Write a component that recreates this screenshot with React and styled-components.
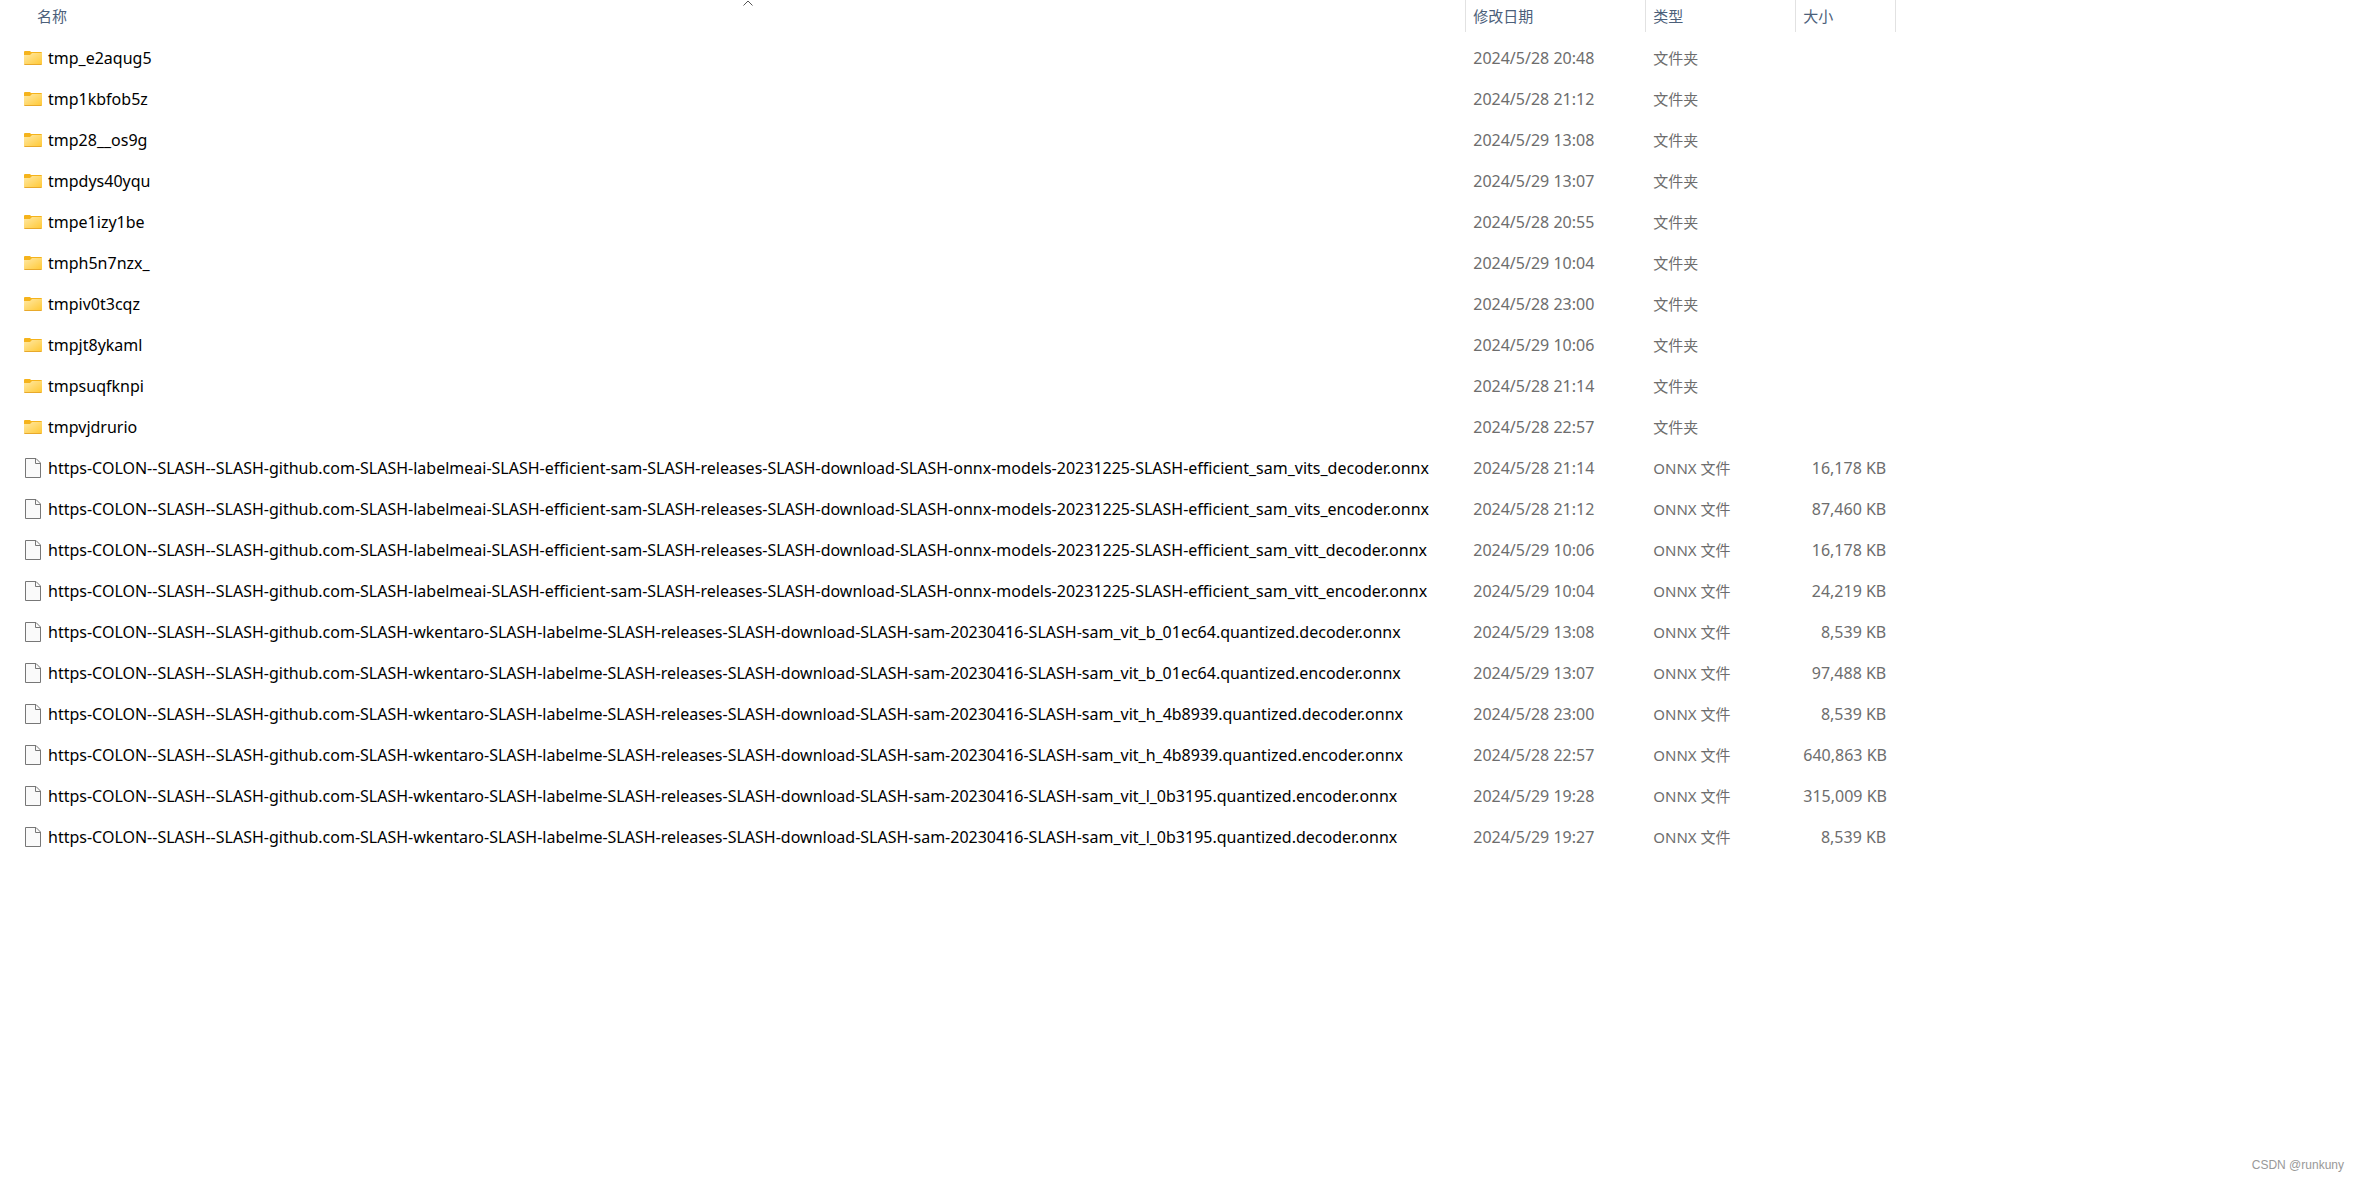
import React from "react"
import styled, { createGlobalStyle } from "styled-components"

const efficientSam = "https-COLON--SLASH--SLASH-github.com-SLASH-labelmeai-SLASH-efficient-sam-SLASH-releases-SLASH-download-SLASH-onnx-models-20231225-SLASH-"
const labelme = "https-COLON--SLASH--SLASH-github.com-SLASH-wkentaro-SLASH-labelme-SLASH-releases-SLASH-download-SLASH-sam-20230416-SLASH-"

const folders = [
  { name: "tmp_e2aqug5", date: "2024/5/28 20:48" },
  { name: "tmp1kbfob5z", date: "2024/5/28 21:12" },
  { name: "tmp28__os9g", date: "2024/5/29 13:08" },
  { name: "tmpdys40yqu", date: "2024/5/29 13:07" },
  { name: "tmpe1izy1be", date: "2024/5/28 20:55" },
  { name: "tmph5n7nzx_", date: "2024/5/29 10:04" },
  { name: "tmpiv0t3cqz", date: "2024/5/28 23:00" },
  { name: "tmpjt8ykaml", date: "2024/5/29 10:06" },
  { name: "tmpsuqfknpi", date: "2024/5/28 21:14" },
  { name: "tmpvjdrurio", date: "2024/5/28 22:57" },
]

const files = [
  { name: efficientSam + "efficient_sam_vits_decoder.onnx", date: "2024/5/28 21:14", size: "16,178 KB" },
  { name: efficientSam + "efficient_sam_vits_encoder.onnx", date: "2024/5/28 21:12", size: "87,460 KB" },
  { name: efficientSam + "efficient_sam_vitt_decoder.onnx", date: "2024/5/29 10:06", size: "16,178 KB" },
  { name: efficientSam + "efficient_sam_vitt_encoder.onnx", date: "2024/5/29 10:04", size: "24,219 KB" },
  { name: labelme + "sam_vit_b_01ec64.quantized.decoder.onnx", date: "2024/5/29 13:08", size: "8,539 KB" },
  { name: labelme + "sam_vit_b_01ec64.quantized.encoder.onnx", date: "2024/5/29 13:07", size: "97,488 KB" },
  { name: labelme + "sam_vit_h_4b8939.quantized.decoder.onnx", date: "2024/5/28 23:00", size: "8,539 KB" },
  { name: labelme + "sam_vit_h_4b8939.quantized.encoder.onnx", date: "2024/5/28 22:57", size: "640,863 KB" },
  { name: labelme + "sam_vit_l_0b3195.quantized.encoder.onnx", date: "2024/5/29 19:28", size: "315,009 KB" },
  { name: labelme + "sam_vit_l_0b3195.quantized.decoder.onnx", date: "2024/5/29 19:27", size: "8,539 KB" },
]

const FolderIcon = () => (
  <Icon width="18" height="14" viewBox="0 0 18 14" aria-hidden="true">
    <defs>
      <linearGradient id="folder-front" x1="0" y1="0" x2="1" y2="1">
        <stop offset="0" stopColor="#ffe9a6" />
        <stop offset="1" stopColor="#ffc937" />
      </linearGradient>
    </defs>
    <path d="M0 1Q0 0 1 0H6L7 1H17Q18 1 18 2V8H0Z" fill="#f5b31b" />
    <path d="M0 4H6L8 2H18V13H0Z" fill="url(#folder-front)" />
    <path d="M0 13H18Q18 14 17 14H1Q0 14 0 13Z" fill="#e8a92b" />
  </Icon>
)

const FileIcon = () => (
  <Icon width="18" height="20" viewBox="0 0 18 20" aria-hidden="true">
    <path d="M1.5 .5H12L16.5 5V19.5H1.5Z" fill="#fafafa" stroke="#777" />
    <path d="M11.5 .5V5.5H16.5" fill="none" stroke="#777" />
  </Icon>
)

const Row = ({ icon, name, date, type, size }) => (
  <tr>
    <NameCell>
      <Name>
        {icon}
        <span>{name}</span>
      </Name>
    </NameCell>
    <Cell>{date}</Cell>
    <TypeCell>{type}</TypeCell>
    <SizeCell>{size}</SizeCell>
  </tr>
)

export default function App() {
  return (
    <Page>
      <GlobalStyle />
      <Table>
        <colgroup>
          <col />
          <Col $width="180px" />
          <Col $width="150px" />
          <Col $width="100px" />
          <Col $width="19.65%" />
        </colgroup>
        <thead>
          <tr>
            <HeadCell aria-sort="ascending">
              <SortButton $main>
                名称
                <Caret width="10" height="6" viewBox="0 0 10 6" aria-hidden="true">
                  <path d="M.5 5.5L5 1L9.5 5.5" fill="none" stroke="#555" />
                </Caret>
              </SortButton>
            </HeadCell>
            <HeadCell><SortButton>修改日期</SortButton></HeadCell>
            <HeadCell><SortButton>类型</SortButton></HeadCell>
            <HeadCell><SortButton>大小</SortButton></HeadCell>
          </tr>
        </thead>
        <tbody>
          {folders.map((item) => (
            <Row key={item.name} icon={<FolderIcon />} type="文件夹" {...item} />
          ))}
          {files.map((item) => (
            <Row key={item.name} icon={<FileIcon />} type="ONNX 文件" {...item} />
          ))}
        </tbody>
      </Table>
      <Credit>CSDN @runkuny</Credit>
    </Page>
  )
}

const GlobalStyle = createGlobalStyle`
  body {
    margin: 0;
    background: #fff;
    font-family: "Noto Sans", "Noto Sans CJK SC", sans-serif;
    font-size: 16px;
    line-height: 20px;
  }
`

const Page = styled.main`
  display: flex;
  flex-direction: column;
  min-height: 100vh;
`

const Table = styled.table`
  width: 100%;
  table-layout: fixed;
  border-collapse: separate;
  border-spacing: 0;
`

const Col = styled.col`
  width: ${({ $width }) => $width};
`

const HeadCell = styled.th`
  height: 37px;
  padding: 0;
  vertical-align: top;
  text-align: left;
  font-size: 15px;
  font-weight: 400;
`

const SortButton = styled.button`
  position: relative;
  display: block;
  width: ${({ $main }) => ($main ? "calc(100% - 30px)" : "100%")};
  height: 32px;
  margin: 0 0 0 ${({ $main }) => ($main ? "30px" : "0")};
  padding: 0 7px;
  border: 0;
  border-right: 1px solid #e2e2e2;
  background: none;
  color: #4c607a;
  font: inherit;
  text-align: left;
`

const Caret = styled.svg`
  position: absolute;
  top: 0;
  left: 50%;
  margin-left: -5px;
`

const Cell = styled.td`
  height: 41px;
  padding: 0 7px;
  color: #6d6d6d;
  white-space: nowrap;
`

const NameCell = styled(Cell)`
  padding-left: 24px;
  color: #000;
`

const TypeCell = styled(Cell)`
  font-size: 15px;
`

const SizeCell = styled(Cell)`
  padding-right: 10px;
  text-align: right;
`

const Name = styled.div`
  display: flex;
  align-items: center;
  gap: 6px;
`

const Icon = styled.svg`
  flex: none;
`

const Credit = styled.footer`
  margin-top: auto;
  padding: 8px 16px;
  color: #999;
  font-family: "Liberation Sans", sans-serif;
  font-size: 12px;
  line-height: 16px;
  text-align: right;
`
